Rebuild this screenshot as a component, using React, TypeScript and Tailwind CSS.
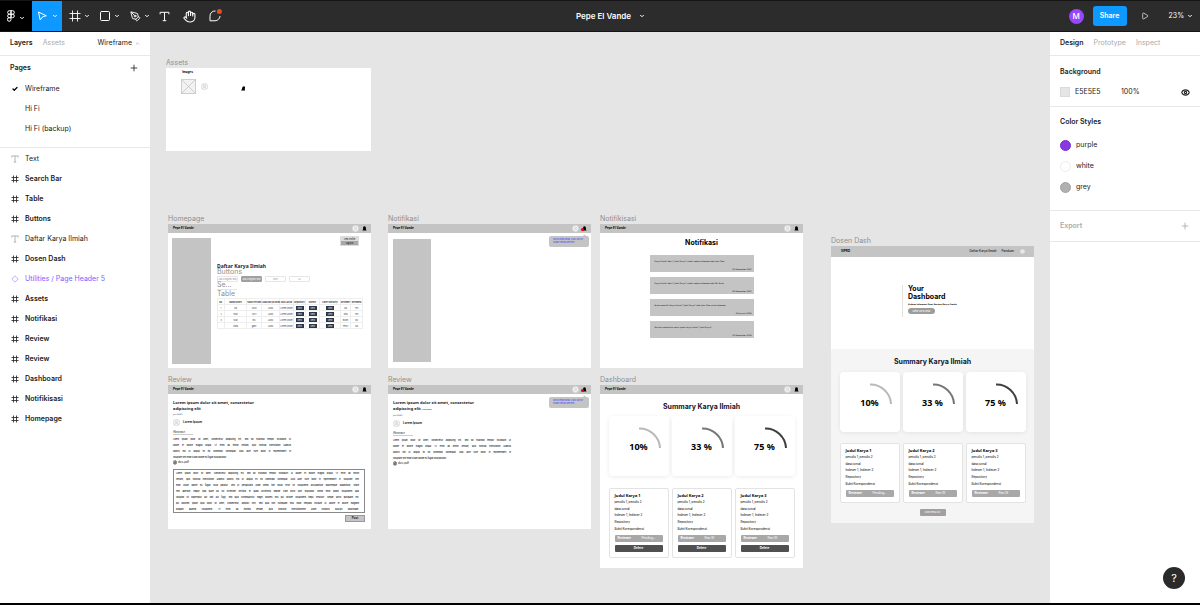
import React from 'react';
import clsx from 'clsx';
import { ChevronDown, ChevronUp, Plus, Check, Hand, Play, Eye, Square, PenTool, FileText } from 'lucide-react';

const ABSTRACT = [
  'Lorem ipsum dolor sit amet, consectetur adipiscing elit, sed do eiusmod tempor incididunt ut',
  'labore et dolore magna aliqua. Ut enim ad minim veniam, quis nostrud exercitation ullamco',
  'laboris nisi ut aliquip ex ea commodo consequat. Duis aute irure dolor in reprehenderit in',
  'voluptate velit esse cillum dolore eu fugiat nulla pariatur.',
];

const REVIEW_TEXT = [
  'Lorem ipsum dolor sit amet, consectetur adipiscing elit, sed do eiusmod tempor incididunt ut labore et dolore magna aliqua. Ut enim ad minim',
  'veniam, quis nostrud exercitation ullamco laboris nisi ut aliquip ex ea commodo consequat. Duis aute irure dolor in reprehenderit in voluptate velit',
  'esse cillum dolore eu fugiat nulla pariatur. Sed ut perspiciatis unde omnis iste natus error sit voluptatem accusantium doloremque laudantium, totam',
  'rem aperiam, eaque ipsa quae ab illo inventore veritatis et quasi architecto beatae vitae dicta sunt explicabo. Nemo enim ipsam voluptatem quia',
  'voluptas sit aspernatur aut odit aut fugit, sed quia consequuntur magni dolores eos qui ratione voluptatem sequi nesciunt. Neque porro quisquam est,',
  'qui dolorem ipsum quia dolor sit amet, consectetur, adipisci velit, sed quia non numquam eius modi tempora incidunt ut labore et dolore magnam',
  'aliquam quaerat voluptatem. Ut enim ad minima veniam, quis nostrum exercitationem ullam corporis suscipit laboriosam.',
];

const PAGES = ['Wireframe', 'Hi Fi', 'Hi Fi (backup)'];

const LAYERS = [
  { name: 'Text', type: 'text' },
  { name: 'Search Bar', type: 'frame' },
  { name: 'Table', type: 'frame' },
  { name: 'Buttons', type: 'frame' },
  { name: 'Daftar Karya Ilmiah', type: 'text' },
  { name: 'Dosen Dash', type: 'frame' },
  { name: 'Utilities / Page Header 5', type: 'component' },
  { name: 'Assets', type: 'frame' },
  { name: 'Notifikasi', type: 'frame' },
  { name: 'Review', type: 'frame' },
  { name: 'Review', type: 'frame' },
  { name: 'Dashboard', type: 'frame' },
  { name: 'Notifikisasi', type: 'frame' },
  { name: 'Homepage', type: 'frame' },
];

const COLOR_STYLES = [
  { name: 'purple', swatch: 'bg-[#8a38e0] border-[#7a2fd0]' },
  { name: 'white', swatch: 'bg-white border-[#ececec]' },
  { name: 'grey', swatch: 'bg-[#b0b0b0] border-[#a2a2a2]' },
];

const COLUMNS = [
  { label: 'No.', width: 'w-[7px]' },
  { label: 'Nama Dosen', width: 'w-[22px]' },
  { label: 'Tahun Periode', width: 'w-[15px]' },
  { label: 'Judul Karya Ilmiah', width: 'w-[18px]' },
  { label: 'Data Jurnal', width: 'w-[14px]' },
  { label: 'Repository', width: 'w-[12px]' },
  { label: 'Indexer', width: 'w-[14px]' },
  { label: 'Cover Similarity', width: 'w-[21px]' },
  { label: 'Reviewer', width: 'w-[10px]' },
  { label: 'Reviewed', width: 'w-[12px]' },
];

const ROWS = [
  ['1', 'Adi', '2020', 'Judul', 'Lorem Ipsum', 'View', 'View', 'View', 'Adi', 'Yes'],
  ['2', 'Budi', '2021', 'Judul', 'Lorem Ipsum', 'View', 'View', 'View', 'Rita', 'Yes'],
  ['3', 'Rudi', 'Blu', 'Judul', 'Lorem Ipsum', 'View', 'View', 'View', 'Budhi', 'No'],
  ['', 'Sinta', 'ganti', 'Judul', 'Lorem Ipsum', 'View', 'View', 'View', 'Tessy', 'No'],
];

const NOTIFICATIONS = [
  { text: 'Karya Ilmiah Versi "Judul Karya" sudah selesai direview oleh John Doe', date: '30 Desember 2021' },
  { text: 'Karya Ilmiah Versi "Judul Karya" sudah selesai direview oleh Mr. Anak', date: '25 Desember 2021' },
  { text: 'Anda memiliki Karya Ilmiah "Judul Karya" oleh John Doe untuk direview', date: '06 Januari 2019' },
  { text: 'Ruslam melakukan revisi pada karya ilmiah "Judul Karya"', date: '12 Desember 2018' },
];

const GAUGES = [
  { label: '10%', color: '#b9b9b9' },
  { label: '33 %', color: '#777777' },
  { label: '75 %', color: '#3f3f3f' },
];

const WORKS = [
  { title: 'Judul Karya 1', reviewer: 'Pending...' },
  { title: 'Judul Karya 2', reviewer: 'Rezi W' },
  { title: 'Judul Karya 3', reviewer: 'Rezi W' },
];

const TextGlyph = ({ className }: { className?: string }) => (
  <svg viewBox="0 0 10 10" fill="none" stroke="currentColor" strokeWidth=".9" className={className}>
    <path d="M1 3V1.2h8V3M5 1.2v7.6M3.4 8.8h3.2" />
  </svg>
);

const Bell = ({ className }: { className?: string }) => (
  <svg viewBox="0 0 10 10" className={className}>
    <path d="M5 0.5C3 0.8 2.2 2 2.2 4v2.6L0.8 9h8.4L7.8 6.6V4C7.8 2 7 0.8 5 0.5z" fill="#000" />
  </svg>
);

const Avatar = ({ className }: { className?: string }) => (
  <svg viewBox="0 0 14 14" fill="none" className={className}>
    <circle cx="7" cy="7" r="6.4" fill="#f5f5f5" stroke="#c8c8c8" strokeWidth="1" />
    <circle cx="7" cy="5.6" r="2" stroke="#c0c0c0" />
    <path d="M3.2 11.2C4 9 5.4 8.4 7 8.4s3 .6 3.8 2.8" stroke="#c0c0c0" />
  </svg>
);

const ToolPair = ({ label, children }: { label: string; children: React.ReactNode }) => (
  <button aria-label={label} className="w-[30px] h-full pl-[5px] flex items-center justify-center gap-[3px]">
    {children}
    <ChevronDown className="w-[6px] h-[6px]" strokeWidth={4} />
  </button>
);

const Toolbar = () => (
  <header className="h-8 shrink-0 bg-[#2c2c2c] border-y border-[#151515] text-white flex items-center justify-between">
    <div className="flex-1 h-full flex items-center">
      <button aria-label="Main menu" className="w-8 h-full bg-black flex items-center justify-center gap-1">
        <svg viewBox="0 0 8 12" fill="none" stroke="#fff" strokeWidth="1" className="w-2 h-3">
          <path d="M4 .7H2.4a1.7 1.7 0 0 0 0 3.5H4zM4 .7h1.6a1.7 1.7 0 0 1 0 3.5H4zM4 4.2H2.4a1.7 1.7 0 0 0 0 3.5H4zM4 7.7H2.4A1.8 1.8 0 1 0 4 9.5z" />
          <circle cx="5.6" cy="6" r="1.7" />
        </svg>
        <ChevronDown className="w-[6px] h-[6px] mt-1" strokeWidth={4} />
      </button>
      <button aria-label="Move" className="w-[30px] h-full bg-[#0d99ff] flex items-center justify-center gap-[5px]">
        <svg viewBox="0 0 10 10" fill="none" stroke="#fff" className="w-[10px] h-[10px]">
          <path d="M1.5 1l7.8 3.8-3.7 1L3.2 9z" strokeLinejoin="round" />
        </svg>
        <ChevronDown className="w-[6px] h-[6px]" strokeWidth={4} />
      </button>
      <ToolPair label="Frame">
        <svg viewBox="0 0 12 12" stroke="#fff" strokeWidth=".9" className="w-3 h-3">
          <path d="M3.5 .5v11M8.5 .5v11M.5 3.5h11M.5 8.5h11" />
        </svg>
      </ToolPair>
      <ToolPair label="Shape">
        <Square className="w-3 h-3" strokeWidth={2} />
      </ToolPair>
      <ToolPair label="Pen">
        <PenTool className="w-[11px] h-[11px]" strokeWidth={2} />
      </ToolPair>
      <button aria-label="Text" className="w-[25px] h-full flex items-center justify-center">
        <TextGlyph className="w-[11px] h-[11px]" />
      </button>
      <button aria-label="Hand" className="w-[25px] h-full flex items-center justify-center">
        <Hand className="w-[13px] h-[13px]" strokeWidth={2} />
      </button>
      <button aria-label="Comment" className="w-[25px] h-full flex items-center justify-center">
        <svg viewBox="0 0 14 14" fill="none" className="w-[14px] h-[14px]">
          <path d="M7.5 2A5 5 0 0 0 2 7.2v4.6h5A5 5 0 0 0 12 7" stroke="#fff" />
          <circle cx="11.4" cy="2.6" r="2.5" fill="#f24822" />
        </svg>
      </button>
    </div>
    <button className="pl-7 flex items-center gap-2 text-[8px] font-semibold">
      Pepe El Vande
      <ChevronDown className="w-[6px] h-[6px]" strokeWidth={4} />
    </button>
    <div className="flex-1 h-full flex items-center justify-end pr-[7px]">
      <span className="w-[15px] h-[15px] mr-[9px] rounded-full bg-[#9747ff] text-[8px] font-medium flex items-center justify-center">M</span>
      <button className="w-[34px] h-5 mr-[14px] rounded-[3px] bg-[#0d99ff] text-[7px] font-semibold">Share</button>
      <button aria-label="Present" className="mr-5">
        <Play className="w-2 h-2" strokeWidth={2} />
      </button>
      <button className="flex items-center gap-[3px] text-[7px]">
        23%
        <ChevronDown className="w-[6px] h-[6px]" strokeWidth={4} />
      </button>
    </div>
  </header>
);

const LayerIcon = ({ type }: { type: string }) => {
  if (type === 'text') return <TextGlyph className="w-2 h-2 text-[#999]" />;
  if (type === 'component')
    return (
      <svg viewBox="0 0 10 10" fill="none" stroke="#b59cf7" className="w-2 h-2">
        <path d="M5 1l4 4-4 4-4-4z" />
      </svg>
    );
  return (
    <svg viewBox="0 0 8 8" stroke="#333" strokeWidth=".9" className="w-2 h-2">
      <path d="M2.5 .5v7M5.5 .5v7M.5 2.5h7M.5 5.5h7" />
    </svg>
  );
};

const LeftPanel = () => (
  <aside className="w-[150px] shrink-0 bg-white text-[7px] text-[#222]">
    <div className="h-6 border-b border-[#e8e8e8] px-[10px] flex items-center">
      <button className="font-semibold">Layers</button>
      <button className="ml-[10px] text-[#aaa]">Assets</button>
      <button className="ml-auto flex items-center gap-[3px]">
        Wireframe
        <ChevronUp className="w-[5px] h-[5px] text-[#999]" strokeWidth={3} />
      </button>
    </div>
    <div className="border-b border-[#e8e8e8] pb-2">
      <div className="h-[23px] pt-px pl-[10px] pr-[11px] flex items-center justify-between">
        <h2 className="font-semibold">Pages</h2>
        <button aria-label="Add page">
          <Plus className="w-[10px] h-[10px]" strokeWidth={2} />
        </button>
      </div>
      <ul>
        {PAGES.map((page, idx) => (
          <li key={page}>
            <button className="w-full h-5 pl-3 flex items-center gap-[7px]">
              <Check className={clsx('w-[6px] h-[6px] text-black', idx !== 0 && 'invisible')} strokeWidth={5} />
              {page}
            </button>
          </li>
        ))}
      </ul>
    </div>
    <ul className="pt-px">
      {LAYERS.map((layer, idx) => (
        <li key={idx}>
          <button
            className={clsx(
              'w-full h-5 pl-[11px] flex items-center gap-[6px]',
              layer.type === 'frame' && 'font-semibold',
              layer.type === 'component' && 'text-[#7b61ff]'
            )}
          >
            <LayerIcon type={layer.type} />
            {layer.name}
          </button>
        </li>
      ))}
    </ul>
  </aside>
);

const RightPanel = () => (
  <aside className="relative w-[150px] shrink-0 bg-white text-[7px] text-[#222]">
    <div className="h-6 border-b border-[#e8e8e8] px-[10px] flex items-center gap-[10px]">
      <button className="font-semibold">Design</button>
      <button className="text-[#aaa]">Prototype</button>
      <button className="text-[#aaa]">Inspect</button>
    </div>
    <section className="border-b border-[#e8e8e8] px-[10px] pt-[6px] pb-1">
      <h2 className="h-5 flex items-center font-semibold">Background</h2>
      <div className="h-5 flex items-center">
        <span className="w-[10px] h-[10px] bg-[#e5e5e5] border border-[#dadada]" />
        <input aria-label="Background color" defaultValue="E5E5E5" className="ml-[5px] w-[46px]" />
        <input aria-label="Background opacity" defaultValue="100%" className="w-8" />
        <button aria-label="Toggle background" className="ml-auto">
          <Eye className="w-[9px] h-[9px]" strokeWidth={3} />
        </button>
      </div>
    </section>
    <section className="border-b border-[#e8e8e8] px-[10px] pt-[5px] pb-3">
      <h2 className="h-5 mb-[3px] flex items-center font-semibold">Color Styles</h2>
      <ul>
        {COLOR_STYLES.map((style) => (
          <li key={style.name}>
            <button className="h-[21px] flex items-center gap-[5px]">
              <span className={clsx('w-[11px] h-[11px] rounded-full border', style.swatch)} />
              {style.name}
            </button>
          </li>
        ))}
      </ul>
    </section>
    <section className="h-[31px] border-b border-[#e8e8e8] px-[10px] flex items-center justify-between text-[#aaa]">
      <h2 className="font-semibold">Export</h2>
      <button aria-label="Add export">
        <Plus className="w-[10px] h-[10px]" strokeWidth={2} />
      </button>
    </section>
    <button
      aria-label="Help"
      className="absolute right-[15px] bottom-[14px] w-[22px] h-[22px] rounded-full bg-[#2a2a2a] text-white text-[11px] flex items-center justify-center"
    >
      ?
    </button>
  </aside>
);

type FrameProps = { name: string; position: string; size: string; children: React.ReactNode };

const Frame = ({ name, position, size, children }: FrameProps) => (
  <section className={clsx('absolute', position)}>
    <h3 className="h-[11px] text-[7px] leading-[12px] text-[#8f8f8f] whitespace-nowrap">{name}</h3>
    <div className={clsx('bg-white overflow-hidden', size)}>{children}</div>
  </section>
);

const AppHeader = ({ alert }: { alert?: boolean }) => (
  <div className="h-[9px] bg-[#c4c4c4] pl-[5px] pr-1 flex items-center">
    <span className="text-[3px] font-bold text-black">Pepe El Vande</span>
    <Avatar className="ml-auto w-[7px] h-[7px]" />
    <span className="relative ml-[3px]">
      <Bell className="w-[5px] h-[5px]" />
      {alert && <span className="absolute -left-px bottom-0 w-[3px] h-[3px] rounded-full bg-red-600" />}
    </span>
  </div>
);

const Assets = () => (
  <Frame name="Assets" position="left-4 top-[25px]" size="w-[205px] h-[83px]">
    <div className="pl-[15px] pt-[2px]">
      <p className="w-[13px] text-center text-[3px] leading-[4px] font-bold">Images</p>
      <div className="mt-[5px] flex items-center">
        <svg viewBox="0 0 15 15" fill="#f2f2f2" stroke="#bbb" className="w-[15px] h-[15px]">
          <path d="M.5 .5h14v14H.5zM.5 .5l14 14M14.5 .5l-14 14" strokeWidth=".7" />
        </svg>
        <Avatar className="ml-[5px] w-[7px] h-[7px]" />
        <Bell className="ml-[33px] mt-1 w-[5px] h-[5px] skew-x-[-12deg]" />
      </div>
    </div>
  </Frame>
);

const Homepage = () => (
  <Frame name="Homepage" position="left-[18px] top-[181px]" size="w-[203px] h-[144px]">
    <AppHeader />
    <div className="relative flex gap-[6px] pl-1 pt-[5px]">
      <div className="w-[39px] h-[126px] bg-[#c4c4c4]" />
      <div className="pt-[26px]">
        <h4 className="font-['Noto_Sans',sans-serif] text-[5px] leading-[4px] font-bold text-[#1a1f36]">Daftar Karya Ilmiah</h4>
        <p className="text-[7px] leading-[7px] text-[#8f8f8f]">Buttons</p>
        <div className="mt-px flex gap-[3px] text-[2px] leading-[4px] text-[#888]">
          <button className="w-[21px] h-[6px] border border-[#e6e6e6] rounded-[1px]">Add Assigned Task</button>
          <button className="w-[21px] h-[6px] border border-[#a0a0a0] bg-[#a0a0a0] text-white rounded-[1px]">Add Assigned Task</button>
          <button className="w-[21px] h-[6px] border border-[#e6e6e6] rounded-[1px]">Story</button>
          <button className="w-[21px] h-[6px] border border-[#e6e6e6] rounded-[1px]">All</button>
        </div>
        <p className="text-[7px] leading-[6px] text-[#8f8f8f]">Se...</p>
        <input aria-label="Search" className="block w-5 h-[2px] border-b border-[#e6e6e6]" />
        <p className="text-[7px] leading-[7px] text-[#8f8f8f]">Table</p>
        <table className="mt-px w-[145px] table-fixed border-collapse text-[2px] leading-[4px] text-center text-[#333]">
          <thead>
            <tr className="h-[6px]">
              {COLUMNS.map((col) => (
                <th key={col.label} className={clsx('p-0 border border-[#eee] whitespace-nowrap font-bold', col.width)}>
                  {col.label}
                </th>
              ))}
            </tr>
          </thead>
          <tbody>
            {ROWS.map((row, r) => (
              <tr key={r} className="h-[6px]">
                {row.map((cell, c) => (
                  <td key={c} className="p-0 border border-[#eee] whitespace-nowrap">
                    {cell === 'View' ? <button className="block mx-auto w-2 bg-[#2b3648] text-white">View</button> : cell}
                  </td>
                ))}
              </tr>
            ))}
          </tbody>
        </table>
      </div>
      <div className="absolute right-3 top-[3px] w-[19px] p-px bg-[#dcdcdc] text-center text-[2px] leading-[4px] text-black">
        <p>View Profile</p>
        <p className="bg-[#a8a8a8]">Log Out</p>
      </div>
    </div>
  </Frame>
);

const Popup = () => (
  <div className="absolute right-[2px] top-[3px] w-10 h-[11px] rounded-[2px] bg-[#c4c4c4] px-1 py-[2px] text-[2px] leading-[3px] text-[#3b3bff]">
    <span className="absolute right-[3px] -top-px w-[3px] h-[3px] rotate-45 bg-[#c4c4c4]" />
    <p className="whitespace-nowrap">Karya Ilmiah anda "Judul Karya"</p>
    <p>sudah selesai direview</p>
  </div>
);

const Notifikasi = () => (
  <Frame name="Notifikasi" position="left-[238px] top-[181px]" size="w-[203px] h-[144px]">
    <AppHeader alert />
    <div className="relative pl-[5px] pt-[6px]">
      <div className="w-[38px] h-[123px] bg-[#c4c4c4]" />
      <Popup />
    </div>
  </Frame>
);

const Notifikisasi = () => (
  <Frame name="Notifikisasi" position="left-[450px] top-[181px]" size="w-[203px] h-[144px]">
    <AppHeader />
    <h4 className="mt-[5px] mb-2 text-center text-[7px] leading-[9px] font-bold text-black">Notifikasi</h4>
    <ul className="mx-auto w-[104px] flex flex-col gap-[5px] font-['DejaVu_Sans',sans-serif] text-[2px] text-black">
      {NOTIFICATIONS.map((item) => (
        <li key={item.date} className="h-[17px] pl-[5px] pr-[2px] pt-1 pb-px flex flex-col justify-between bg-[#c4c4c4]">
          <p className="leading-[4px]">{item.text}</p>
          <p className="leading-[4px] text-right">{item.date}</p>
        </li>
      ))}
    </ul>
  </Frame>
);

const ReviewBody = ({ revised }: { revised?: boolean }) => (
  <>
    <h4 className="w-[110px] font-['Noto_Sans',sans-serif] text-[4px] leading-[6px] font-bold text-[#222]">
      Lorem ipsum dolor sit amet, consectetur
      <br />
      adipiscing elit {revised && <span className="text-[2px] font-normal">(Reviewed)</span>}
    </h4>
    <p className="font-['DejaVu_Sans',sans-serif] text-[2px] leading-[5px]">Juni 2021</p>
    <div className="mt-[2px] flex items-center gap-[3px]">
      <Avatar className="w-[7px] h-[7px]" />
      <span className="text-[3px] leading-[7px] font-bold">Lorem Ipsum</span>
    </div>
    <p className="mt-1 w-5 border-b border-[#ccc] text-[3px] leading-[4px]">Abstract</p>
    <div className="mt-px w-[118px] text-[2px] leading-[6px] font-medium text-black">
      {ABSTRACT.map((line, idx) => (
        <p key={idx} className={clsx(idx < ABSTRACT.length - 1 && '[text-align-last:justify]')}>
          {line}
        </p>
      ))}
    </div>
    <a href="#pdf" className="flex items-center gap-px text-[3px] leading-[5px]">
      <FileText className="w-1 h-[5px]" strokeWidth={3} />
      doc.pdf
    </a>
  </>
);

const Review = () => (
  <Frame name="Review" position="left-[18px] top-[342px]" size="w-[203px] h-[144px]">
    <AppHeader />
    <div className="px-[5px] pt-[6px] text-[#222]">
      <ReviewBody />
      <textarea
        aria-label="Review"
        readOnly
        defaultValue={REVIEW_TEXT.join('\n')}
        className="mt-1 block w-[192px] h-11 border border-[#888] pl-[2px] pr-[5px] resize-none overflow-hidden text-[2px] leading-[6px] font-medium text-justify [text-align-last:justify] text-black"
      />
      <button className="mt-[2px] ml-[172px] block w-5 h-[7px] border border-[#999] bg-[#c4c4c4] text-[3px] leading-[5px] font-bold">
        Post
      </button>
    </div>
  </Frame>
);

const ReviewNotified = () => (
  <Frame name="Review" position="left-[238px] top-[342px]" size="w-[203px] h-[144px]">
    <AppHeader alert />
    <div className="relative px-[5px] pt-[6px] text-[#222]">
      <ReviewBody revised />
      <Popup />
    </div>
  </Frame>
);

const Gauges = () => (
  <div className="flex gap-[3px]">
    {GAUGES.map((gauge) => (
      <div key={gauge.label} className="w-[60px] h-[60px] grid place-items-center rounded-[4px] bg-white shadow-[0_1px_4px_rgba(0,0,0,0.08)]">
        <svg viewBox="0 0 60 60" fill="none" className="w-[60px] h-[60px] [grid-area:1/1]">
          <path d="M30 12.5A20.5 20.5 0 0 1 51 32" stroke={gauge.color} strokeWidth="2" />
        </svg>
        <span className="[grid-area:1/1] font-['Noto_Sans',sans-serif] text-[9px] leading-none font-bold text-black">{gauge.label}</span>
      </div>
    ))}
  </div>
);

const Works = ({ removable }: { removable?: boolean }) => (
  <div className="flex gap-[3px] font-['Inter',sans-serif] text-[3px] text-[#222]">
    {WORKS.map((work) => (
      <article key={work.title} className="w-[60px] px-[5px] pt-1 pb-[5px] rounded-[2px] border border-[#e3e3e3] bg-white">
        <div className="h-[39px] flex flex-col justify-between leading-[5px] font-medium">
          <h5 className="font-['Noto_Sans',sans-serif] text-[4px] font-bold text-black">{work.title}</h5>
          <p>penulis 1, penulis 2</p>
          <p>data jurnal</p>
          <p>Indexer 1, Indexer 2</p>
          <p>Repository</p>
          <p>Bukti Korespondensi</p>
        </div>
        <div className="mt-[3px] h-[7px] px-[3px] flex items-center rounded-[1px] bg-[#a8a8a8] text-white">
          <span className="w-6 font-bold">Reviewer</span>
          <span>{work.reviewer}</span>
        </div>
        {removable && (
          <button className="mt-[3px] block w-full h-[7px] rounded-[1px] bg-[#505050] text-white leading-[7px] font-bold">Delete</button>
        )}
      </article>
    ))}
  </div>
);

const Dashboard = () => (
  <Frame name="Dashboard" position="left-[450px] top-[342px]" size="w-[203px] h-[183px]">
    <AppHeader />
    <div className="pt-2 flex flex-col items-center">
      <h4 className="mb-[5px] text-[7px] leading-[9px] font-bold text-[#14142b]">Summary Karya Ilmiah</h4>
      <Gauges />
      <div className="mt-3">
        <Works removable />
      </div>
    </div>
  </Frame>
);

const DosenDash = () => (
  <Frame name="Dosen Dash" position="left-[681px] top-[203px]" size="w-[203px] h-[277px]">
    <div className="h-[11px] bg-[#c4c4c4] pl-[10px] pr-[9px] flex items-center text-[3px] text-black">
      <span className="font-bold">SIPRO</span>
      <a href="#daftar" className="ml-auto">Daftar Karya Ilmiah</a>
      <a href="#panduan" className="ml-[5px] mr-[6px]">Panduan</a>
      <Avatar className="w-[5px] h-[5px]" />
    </div>
    <div className="h-[92px] pl-[71px] pt-7">
      <div className="h-8 border-l border-[#e0e0e0] pl-[5px]">
        <h4 className="text-[7px] leading-[8px] font-bold text-black">
          Your
          <br />
          Dashboard
        </h4>
        <p className="font-['DejaVu_Sans',sans-serif] text-[2px] leading-[6px] font-bold">Sistem Informasi Peer Review Karya Ilmiah</p>
        <button className="mt-px block w-[27px] h-[6px] rounded-full bg-[#9c9c9c] text-white text-[2px] leading-[6px]">Daftar Karya Ilmiah</button>
      </div>
    </div>
    <div className="h-[174px] bg-[#f5f5f5] rounded-t-[2px] pt-2 flex flex-col items-center">
      <h4 className="mb-[6px] text-[7px] leading-[9px] font-bold text-[#14142b]">Summary Karya Ilmiah</h4>
      <Gauges />
      <div className="mt-[11px]">
        <Works />
      </div>
      <button className="mt-[6px] w-[26px] h-[7px] rounded-[1px] bg-[#a0a0a0] text-white text-[2px] leading-[7px]">Lihat Semua List</button>
    </div>
  </Frame>
);

const App: React.FC = () => {
  return (
    <div className="h-screen flex flex-col border-b-2 border-black font-['Inter','Liberation_Sans',sans-serif]">
      <Toolbar />
      <div className="flex-1 min-h-0 flex">
        <LeftPanel />
        <main className="relative flex-1 min-w-0 overflow-hidden bg-[#e5e5e5]">
          <Assets />
          <Homepage />
          <Notifikasi />
          <Notifikisasi />
          <Review />
          <ReviewNotified />
          <Dashboard />
          <DosenDash />
        </main>
        <RightPanel />
      </div>
    </div>
  );
};

export default App;
